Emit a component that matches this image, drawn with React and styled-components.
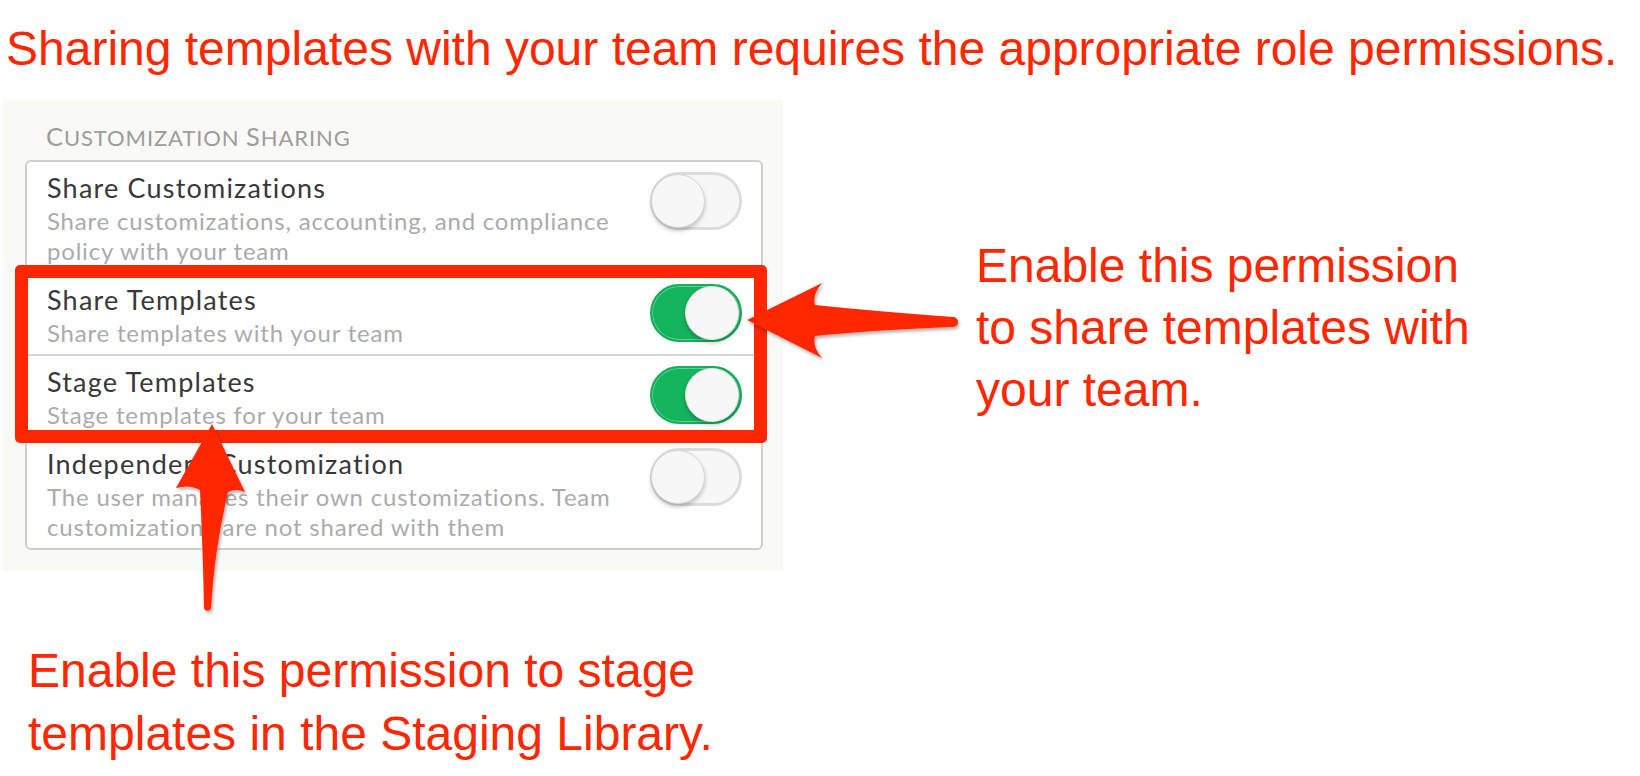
import styled, { createGlobalStyle } from 'styled-components';

// styles
const GlobalStyle = createGlobalStyle`
  html, body {
    margin: 0;
    padding: 0;
    background: #ffffff;
  }
`;

const RED = '#ff2600';

const StyledPage = styled.div`
  position: relative;
  width: 1640px;
  height: 776px;
  overflow: hidden;
  background: #ffffff;
`;

const StyledTitle = styled.h1`
  margin: 0;
  padding: 21px 0 0 6px;
  font: 400 48px/55px 'Liberation Sans', Arial, sans-serif;
  color: ${RED};
  white-space: nowrap;
`;

const StyledBody = styled.div`
  display: grid;
  grid-template-columns: 784px 1fr;
  margin-top: 24px;
`;

const StyledLeft = styled.div`
  display: flex;
  flex-direction: column;
`;

const StyledPanel = styled.section`
  width: 780px;
  margin-left: 3px;
  padding: 21px 20px 21px 22px;
  box-sizing: border-box;
  background: #f9f9f6;
`;

const StyledHeader = styled.div`
  padding-left: 21px;
  margin-bottom: 7px;
  font: 400 22px/30px Lato, 'Open Sans', sans-serif;
  text-transform: uppercase;
  letter-spacing: 0.9px;
  color: #9d9d9d;
`;

const StyledInitial = styled.span`
  font-size: 25.5px;
`;

const StyledCard = styled.div`
  border: 2px solid #cfcfcf;
  border-radius: 6px;
  background: #ffffff;
  overflow: hidden;
`;

const StyledRow = styled.div`
  display: flex;
  align-items: flex-start;
  padding: 10px 19px 6px 20px;
  border-top: 2px solid #d6d6d6;

  &:first-child {
    border-top: none;
  }
`;

const StyledText = styled.div`
  flex: 1;
  padding-right: 30px;
`;

const StyledRowTitle = styled.div`
  font: 400 27px/32px Lato, 'Open Sans', sans-serif;
  letter-spacing: 1.2px;
  color: #383838;
`;

const StyledRowDesc = styled.div`
  margin-top: 2px;
  font: 400 24px/30px Lato, 'Open Sans', sans-serif;
  letter-spacing: 0.8px;
  color: #ababab;
`;

const StyledTrack = styled.span`
  display: flex;
  flex: none;
  align-items: center;
  justify-content: ${({ $on }) => ($on ? 'flex-end' : 'flex-start')};
  width: 92px;
  height: 58px;
  box-sizing: border-box;
  border-radius: 29px;
  padding: 0 1px;
  background: ${({ $on }) => ($on ? '#14b45c' : '#f7f7f7')};
  border: ${({ $on }) => ($on ? '2px solid #12b05a' : '3px solid #dcdcdc')};
  box-shadow: ${({ $on }) => ($on ? 'inset 0 0 0 1px rgba(255, 255, 255, 0.35)' : 'none')};
`;

const StyledKnob = styled.span`
  width: 54px;
  height: 54px;
  box-sizing: border-box;
  border-radius: 50%;
  background: #f7f7f7;
  border: 1px solid ${({ $on }) => ($on ? '#e2e2e2' : '#d6d6d6')};
  box-shadow: 0 3px 4px rgba(0, 0, 0, 0.22);
  margin-left: ${({ $on }) => ($on ? '0' : '-3px')};
`;

const StyledNote = styled.div`
  font: 400 48px/63px 'Liberation Sans', Arial, sans-serif;
  color: ${RED};
  white-space: nowrap;
`;

const StyledBottomNote = styled(StyledNote)`
  margin-top: 68px;
  padding-left: 28px;
`;

const StyledSideNote = styled(StyledNote)`
  padding: 135px 0 0 192px;
  line-height: 62px;
`;

const StyledHighlight = styled.div`
  position: absolute;
  left: 15px;
  top: 265px;
  width: 752px;
  height: 178px;
  box-sizing: border-box;
  border: 13px solid ${RED};
  border-radius: 5px;
  pointer-events: none;
`;

const StyledOverlay = styled.svg`
  position: absolute;
  left: 0;
  top: 0;
  pointer-events: none;
`;

const settings = [
  {
    id: 'share-customizations',
    title: 'Share Customizations',
    desc: 'Share customizations, accounting, and compliance policy with your team',
    on: false,
  },
  { id: 'share-templates', title: 'Share Templates', desc: 'Share templates with your team', on: true },
  { id: 'stage-templates', title: 'Stage Templates', desc: 'Stage templates for your team', on: true },
  {
    id: 'independent',
    title: 'Independent Customization',
    desc: 'The user manages their own customizations. Team customizations are not shared with them',
    on: false,
  },
];

// renders a label in small caps: first letter of each word a bit taller
const SmallCaps = ({ children }) =>
  children.split(' ').map((word, i) => (
    <span key={word}>
      {i > 0 && ' '}
      <StyledInitial>{word[0]}</StyledInitial>
      {word.slice(1)}
    </span>
  ));

const Toggle = ({ on }) => (
  <StyledTrack $on={on} role="switch" aria-checked={on}>
    <StyledKnob $on={on} />
  </StyledTrack>
);

const Arrows = () => (
  <StyledOverlay width="1640" height="776" viewBox="0 0 1640 776">
    <defs>
      <filter id="arrowShadow" x="-20%" y="-20%" width="140%" height="140%">
        <feDropShadow dx="1.5" dy="2.5" stdDeviation="1.5" floodColor="#000" floodOpacity="0.3" />
      </filter>
    </defs>
    {/* arrow pointing left at the toggles */}
    <path
      d="M747,320 L822,283 Q812,295 815,305 Q872,311 953,317 A5,5 0 0 1 953,327 Q872,330 815,336 Q812,347 822,358 Z"
      fill={RED}
      filter="url(#arrowShadow)"
    />
    {/* arrow pointing up at the staging row */}
    <path
      d="M212,424 L245,492 Q236,488 228,492 Q214,552 211,608 A3.6,3.6 0 0 1 204,608 Q203,552 200,490 Q190,484 176,488 Z"
      fill={RED}
      filter="url(#arrowShadow)"
    />
  </StyledOverlay>
);

const App = () => {
  return (
    <StyledPage>
      <GlobalStyle />
      <StyledTitle>Sharing templates with your team requires the appropriate role permissions.</StyledTitle>
      <StyledBody>
        <StyledLeft>
          <StyledPanel>
            <StyledHeader>
              <SmallCaps>Customization Sharing</SmallCaps>
            </StyledHeader>
            <StyledCard>
              {settings.map((item) => (
                <StyledRow key={item.id}>
                  <StyledText>
                    <StyledRowTitle>{item.title}</StyledRowTitle>
                    <StyledRowDesc>{item.desc}</StyledRowDesc>
                  </StyledText>
                  <Toggle on={item.on} />
                </StyledRow>
              ))}
            </StyledCard>
          </StyledPanel>
          <StyledBottomNote>
            Enable this permission to stage
            <br />
            templates in the Staging Library.
          </StyledBottomNote>
        </StyledLeft>
        <StyledSideNote>
          Enable this permission
          <br />
          to share templates with
          <br />
          your team.
        </StyledSideNote>
      </StyledBody>
      <StyledHighlight />
      <Arrows />
    </StyledPage>
  );
};

export default App;
